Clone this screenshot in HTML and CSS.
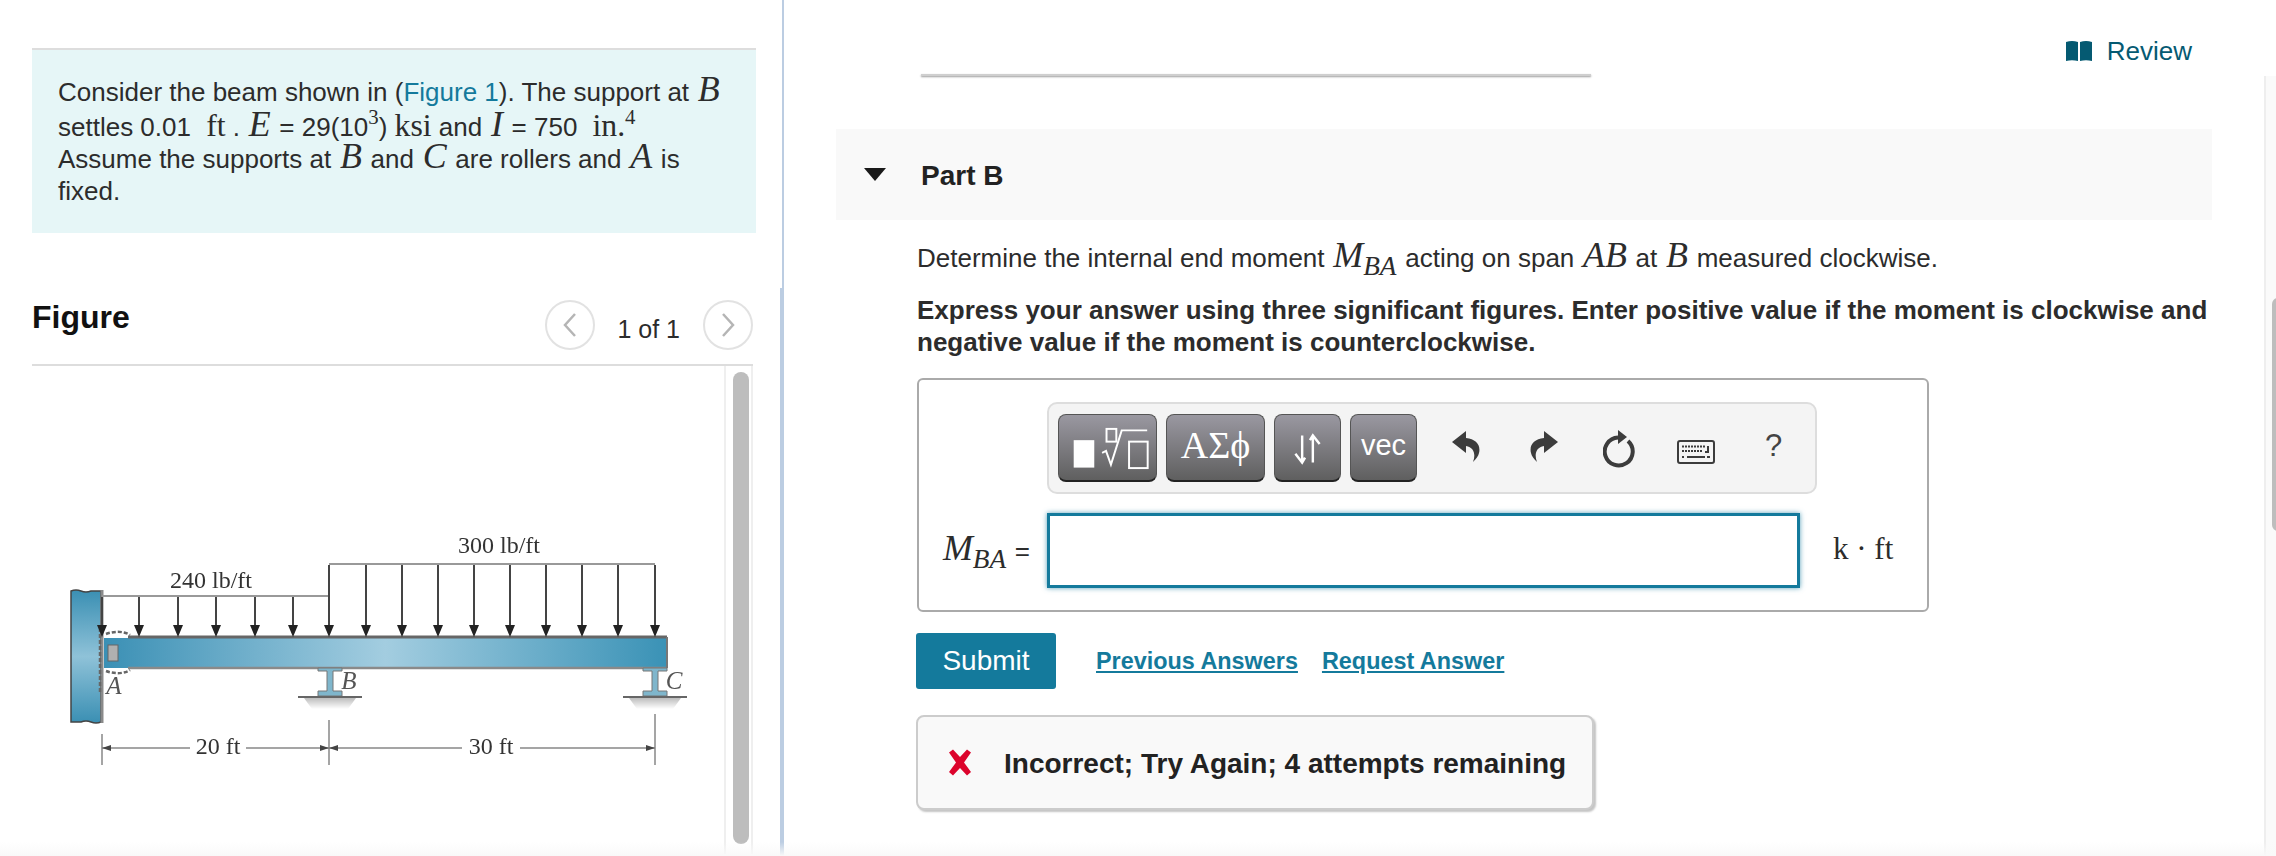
FILE: index.html
```html
<!DOCTYPE html>
<html lang="en">
<head>
  <meta charset="UTF-8">
  <title>Part B - Beam</title>
  <link rel="stylesheet" href="styles.css">
</head>
<body>
  <div class="page">
    <!-- Left: problem statement and figure -->
    <aside class="left-panel">
      <div class="info-box">
        <p class="info-first">Consider the beam shown in (<a href="#" class="fig-link">Figure 1</a>). The support at <i class="math">B</i></p>
        <p>settles 0.01 <span class="unit">&nbsp;ft</span> . <i class="math">E</i> = 29(10<sup class="sup">3</sup>) <span class="unit">ksi</span> and <i class="math">I</i> = 750 <span class="unit">&nbsp;in.</span><sup class="sup">4</sup></p>
        <p>Assume the supports at <i class="math">B</i> and <i class="math">C</i> are rollers and <i class="math">A</i> is</p>
        <p>fixed.</p>
      </div>

      <section class="figure-section">
        <div class="figure-head">
          <h2>Figure</h2>
          <div class="pager">
            <button class="pager-btn" aria-label="Previous">
              <svg width="14" height="26" viewBox="0 0 14 26"><path class="chevron" d="M12 2 2 13l10 11"/></svg>
            </button>
            <span class="pager-text">1 of 1</span>
            <button class="pager-btn" aria-label="Next">
              <svg width="14" height="26" viewBox="0 0 14 26"><path class="chevron" d="M2 2l10 11L2 24"/></svg>
            </button>
          </div>
        </div>
        <div class="figure-view">
          <svg class="beam-diagram" width="692" height="488" viewBox="32 366 692 488">
            <defs>
              <linearGradient id="beamFill" x1="0" x2="1" y1="0" y2="0">
                <stop offset="0" stop-color="#3b90b5"/>
                <stop offset="0.5" stop-color="#a3cde0"/>
                <stop offset="1" stop-color="#3a92b6"/>
              </linearGradient>
              <linearGradient id="wallFill" x1="0" x2="0" y1="0" y2="1">
                <stop offset="0" stop-color="#3a8fb3"/>
                <stop offset="0.5" stop-color="#8fc2d8"/>
                <stop offset="1" stop-color="#3a8fb3"/>
              </linearGradient>
              <linearGradient id="groundFill" x1="0" x2="0" y1="0" y2="1">
                <stop offset="0" stop-color="#bdbdbd"/>
                <stop offset="1" stop-color="#ffffff"/>
              </linearGradient>
              <g id="head"><path d="M-5 625H5L0 637Z"/></g>
              <g id="short"><path class="load-shaft" d="M0 597V626"/><use href="#head"/></g>
              <g id="long"><path class="load-shaft" d="M0 565V626"/><use href="#head"/></g>
              <g id="support">
                <path class="ground-shade" d="M-26 698H26L18 709H-18Z"/>
                <path class="support-steel" d="M-12 668H12V671H3V691H12V696H-12V691H-3V671H-12Z"/>
                <path class="ground-line" d="M-32 697H32"/>
              </g>
            </defs>

            <!-- wall and beam -->
            <path class="wall" d="M71 591q5-2 10 0t10 0l10 0V722q-5 2-10 0t-10 0l-10 0Z"/>
            <path class="wall-edge" d="M102 590V723"/>
            <rect class="beam" x="104" y="638" width="563" height="30"/>
            <path class="beam-top" d="M128 637H667"/>
            <path class="beam-bottom" d="M128 668H667"/>
            <path class="beam-end" d="M667 637V668"/>
            <path class="weld" d="M106 634c8-3 18-3 24 1M106 671c8 3 18 3 24-1M100 628V694"/>
            <rect class="bolts" x="108" y="645" width="10" height="16"/>

            <!-- distributed load -->
            <path class="load-line" d="M102 596H329"/>
            <path class="load-line" d="M329 564H655"/>
            <use href="#short" x="102"/>
            <use href="#short" x="139"/>
            <use href="#short" x="178"/>
            <use href="#short" x="216"/>
            <use href="#short" x="255"/>
            <use href="#short" x="293"/>
            <use href="#long" x="329"/>
            <use href="#long" x="366"/>
            <use href="#long" x="402"/>
            <use href="#long" x="438"/>
            <use href="#long" x="474"/>
            <use href="#long" x="510"/>
            <use href="#long" x="546"/>
            <use href="#long" x="582"/>
            <use href="#long" x="618"/>
            <use href="#long" x="655"/>

            <use href="#support" x="330"/>
            <use href="#support" x="655"/>

            <!-- dimensions -->
            <path class="dim-line" d="M102 734V765M329 720V765M655 714V765"/>
            <path class="dim-line" d="M102 748H190M246 748H329M329 748H462M520 748H655"/>
            <path class="dim-head" d="M102 748l9-3v6ZM329 748l-9-3v6ZM329 748l9-3v6ZM655 748l-9-3v6Z"/>

            <text class="fig-label" x="211" y="588" text-anchor="middle">240 lb/ft</text>
            <text class="fig-label" x="499" y="553" text-anchor="middle">300 lb/ft</text>
            <text class="fig-label" x="218" y="754" text-anchor="middle">20 ft</text>
            <text class="fig-label" x="491" y="754" text-anchor="middle">30 ft</text>
            <text class="fig-point" x="114" y="694" text-anchor="middle">A</text>
            <text class="fig-point" x="349" y="689" text-anchor="middle">B</text>
            <text class="fig-point" x="674" y="689" text-anchor="middle">C</text>
          </svg>
          <div class="figure-scroll"><div class="figure-thumb"></div></div>
        </div>
      </section>
    </aside>

    <!-- Right: question -->
    <main class="right-panel">
      <div class="review-row">
        <a href="#" class="review-link">
          <svg class="book-icon" width="26" height="21" viewBox="0 0 26 21"><path d="M0 1q6-2 12 0V20q-6-1.500-12 0ZM14 1q6-2 12 0V20q-6-1.500-12 0Z"/></svg>
          Review
        </a>
      </div>
      <div class="top-rule"></div>

      <div class="part-head">
        <span class="part-caret"></span>
        <h3>Part B</h3>
      </div>

      <div class="part-body">
        <p class="question">Determine the internal end moment <i class="math">M<sub>BA</sub></i> acting on span <i class="math">AB</i> at <i class="math">B</i> measured clockwise.</p>
        <p class="instruction">Express your answer using three significant figures. Enter positive value if the moment is clockwise and negative value if the moment is counterclockwise.</p>

        <div class="answer-box">
          <div class="toolbar">
            <button class="tool-btn tool-wide" aria-label="Templates">
              <svg width="99" height="68" viewBox="0 0 99 68">
                <rect class="tpl-solid" x="15" y="26" width="21" height="28"/>
                <rect class="tpl-line" x="48.500" y="14.500" width="10" height="13"/>
                <path class="tpl-line" d="M44 39l4-2 5 14 11-35h26"/>
                <rect class="tpl-line" x="71.500" y="27.500" width="19" height="27"/>
              </svg>
            </button>
            <button class="tool-btn tool-wide tool-greek">ΑΣϕ</button>
            <button class="tool-btn tool-narrow" aria-label="Arrows">
              <svg width="67" height="68" viewBox="0 0 67 68">
                <path class="tpl-arrow" d="M28 21V49M21 40l7 9 3-5M39 49V21M46 30l-7-9-3 5"/>
              </svg>
            </button>
            <button class="tool-btn tool-narrow tool-vec">vec</button>
            <div class="tool-icons">
              <svg class="tool-icon icon-undo" width="28" height="31" viewBox="0 0 28 31" aria-label="Undo"><path d="M0 11 14 0v7c10 1 15 7 13 15-.5 3-3 6-6 9 3-7 1-15-7-16v7Z"/></svg>
              <svg class="tool-icon icon-redo" width="28" height="31" viewBox="0 0 28 31" aria-label="Redo"><path d="M28 11 14 0v7C4 8-1 14 1 22c.5 3 3 6 6 9-3-7-1-15 7-16v7Z"/></svg>
              <svg class="tool-icon icon-reset" width="34" height="38" viewBox="0 0 34 38" aria-label="Reset"><path class="reset-ring" d="M25 11a14 14 0 1 1-10-3.500"/><path d="M15 0l9 7-9 7Z"/></svg>
              <svg class="tool-icon icon-kb" width="38" height="24" viewBox="0 0 38 24" aria-label="Keyboard">
                <rect class="kb-frame" x="1" y="1" width="36" height="22" rx="2"/>
                <path class="kb-keys" d="M5 6.500h2m1 0h2m1 0h2m1 0h2m1 0h2m1 0h2m1 0h2m1 0h2M5 11h2m1 0h2m1 0h2m1 0h2m1 0h2m1 0h2m1 0h2M31 6v6h-3M5 17h2m3 0h18m2 0h3"/>
              </svg>
              <span class="help-mark">?</span>
            </div>
          </div>

          <div class="input-row">
            <label class="input-label"><i class="math">M<sub>BA</sub></i>&nbsp;=</label>
            <input class="answer-input" type="text" aria-label="Answer">
            <span class="input-unit">k · ft</span>
          </div>
        </div>

        <div class="actions">
          <button class="btn-submit">Submit</button>
          <a href="#" class="action-link link-prev">Previous Answers</a>
          <a href="#" class="action-link">Request Answer</a>
        </div>

        <div class="feedback">
          <svg class="x-icon" width="28" height="27" viewBox="0 0 28 27"><path d="M3 3.500 7 .5l7 7.500 7-7.500 4 3-7 10 7 9.500-4 3.500-7-7.500L7 26.500l-4-3.500 7-9.500Z"/></svg>
          <strong>Incorrect; Try Again; 4 attempts remaining</strong>
        </div>
      </div>

      <div class="page-scroll"><div class="page-thumb"></div></div>
    </main>

    <div class="bottom-fade"></div>
  </div>
</body>
</html>
```

FILE: styles.css
```css
/* Global */
:root {
  --teal: #147a9c;
  --dark-teal: #055a72;
  --text: #2c2c2c;
  --rule: #dddddd;
  --divider: #bccde2;
}

* {
  margin: 0;
  padding: 0;
  box-sizing: border-box;
}

html, body {
  height: 856px;
  overflow: hidden;
  background-color: white;
}

body {
  color: var(--text);
  font-family: 'Liberation Sans', Arial, sans-serif;
  font-size: 26px;
  line-height: 32px;
}

button {
  font-family: inherit;
  border: none;
  cursor: pointer;
}

.page {
  position: relative;
  display: flex;
  height: 856px;
}

.math {
  margin: 0 1.5px;
  font-family: 'Liberation Serif', serif;
  font-style: italic;
  font-size: 1.38em;
  line-height: 0;
}

.math sub {
  font-size: 0.76em;
  line-height: 0;
  vertical-align: -0.3em;
}

.unit {
  font-family: 'Liberation Serif', serif;
  font-size: 1.22em;
  line-height: 0;
}

.sup {
  font-family: 'Liberation Serif', serif;
  font-size: 0.8em;
  line-height: 0;
  vertical-align: 0.6em;
}

/* Left panel */
.left-panel {
  width: 784px;
  flex-shrink: 0;
  padding-top: 48px;
  border-right: 2px solid var(--divider);
}

.info-box {
  width: 724px;
  height: 185px;
  margin-left: 32px;
  padding: 26px 26px 0;
  background-color: #e6f6f7;
  border-top: 2px solid var(--rule);
}

.info-first {
  margin-bottom: 3px;
}

.fig-link {
  color: var(--teal);
  text-decoration: none;
}

.figure-section {
  height: 568px;
  margin-top: 55px;
  padding-left: 32px;
  border-right: 2px solid var(--divider);
}

.figure-head {
  display: flex;
  justify-content: space-between;
  width: 721px;
  height: 78px;
  border-bottom: 2px solid var(--rule);
}

.figure-head h2 {
  font-size: 32px;
  line-height: 36px;
  margin-top: 11px;
  color: #111;
}

.pager {
  display: flex;
  align-items: center;
  height: 50px;
  margin-top: 12px;
}

.pager-btn {
  display: flex;
  align-items: center;
  justify-content: center;
  width: 50px;
  height: 50px;
  border: 2px solid #e2e2e2;
  border-radius: 50%;
  background-color: white;
}

.chevron {
  fill: none;
  stroke: #b5b5b5;
  stroke-width: 2.5;
}

.pager-text {
  margin: 8px 23px 0 22px;
  font-size: 25px;
}

.figure-view {
  display: flex;
}

.beam-diagram {
  display: block;
  flex-shrink: 0;
  filter: blur(0.7px);
}

.figure-scroll {
  width: 29px;
  height: 488px;
  padding: 6px 0 0 7px;
  border-left: 2px solid #efefef;
  border-right: 2px solid #efefef;
}

.figure-thumb {
  width: 16px;
  height: 472px;
  border-radius: 8px;
  background-color: #bdbdbd;
}

/* Beam drawing */
.wall { fill: url(#wallFill); stroke: #444; stroke-width: 1.5; }
.wall-edge { stroke: #8a8a8a; stroke-width: 3; }
.beam { fill: url(#beamFill); }
.beam-top { stroke: #666; stroke-width: 3; }
.beam-bottom { stroke: #8a8a8a; stroke-width: 2.500; }
.beam-end { stroke: #777; stroke-width: 2; }
.weld { fill: none; stroke: #666; stroke-width: 2.500; stroke-dasharray: 4 2; }
.bolts { fill: #b0b0b0; stroke: #666; }
.load-line { stroke: #999; stroke-width: 2; fill: none; }
.load-shaft { stroke: #444; stroke-width: 2; fill: none; }
#head path { fill: #222; }
.ground-shade { fill: url(#groundFill); }
.support-steel { fill: #7fb6cc; stroke: #777; }
.ground-line { stroke: #666; stroke-width: 2; }
.dim-line { stroke: #888; stroke-width: 1.500; fill: none; }
.dim-head { fill: #444; }

.fig-label {
  font-family: 'Liberation Serif', serif;
  font-size: 24px;
  fill: #333;
}

.fig-point {
  font-family: 'Liberation Serif', serif;
  font-style: italic;
  font-size: 25px;
  fill: #555;
}

/* Right panel */
.right-panel {
  position: relative;
  flex: 1;
}

.review-row {
  display: flex;
  justify-content: flex-end;
  height: 74px;
  padding: 35px 84px 0 0;
}

.review-link {
  display: flex;
  align-items: center;
  height: 32px;
  color: var(--dark-teal);
  text-decoration: none;
}

.book-icon {
  margin-right: 15px;
  fill: var(--dark-teal);
}

.top-rule {
  width: 670px;
  height: 2px;
  margin-left: 137px;
  background-color: #cfcfcf;
  box-shadow: 0 1px 2px #999;
}

.part-head {
  display: flex;
  align-items: center;
  width: 1376px;
  height: 91px;
  margin: 53px 0 0 52px;
  padding-left: 28px;
  background-color: #f9f9f9;
}

.part-caret {
  width: 0;
  height: 0;
  margin-right: 35px;
  border-left: 11px solid transparent;
  border-right: 11px solid transparent;
  border-top: 13px solid #1a1a1a;
}

.part-head h3 {
  padding-top: 2px;
  font-size: 28px;
  color: #222;
}

.part-body {
  padding: 22px 0 0 133px;
}

.instruction {
  width: 1310px;
  margin-top: 20px;
  font-weight: bold;
}

.answer-box {
  width: 1012px;
  height: 234px;
  margin-top: 20px;
  padding: 22px 0 0 128px;
  border: 2px solid #aaa;
  border-radius: 6px;
}

.toolbar {
  display: flex;
  align-items: center;
  gap: 9px;
  width: 770px;
  height: 92px;
  padding-left: 9px;
  background-color: #f4f4f4;
  border: 2px solid var(--rule);
  border-radius: 10px;
}

.tool-btn {
  display: flex;
  align-items: center;
  justify-content: center;
  height: 68px;
  padding: 0;
  color: white;
  background: linear-gradient(to bottom, #9a98a1, #5f5f5f);
  border: 1px solid #555;
  border-bottom: 2px solid #222;
  border-radius: 8px;
}

.tool-wide { width: 99px; }
.tool-narrow { width: 67px; }

.tool-greek {
  font-family: 'Liberation Serif', serif;
  font-size: 38px;
  padding-bottom: 6px;
}

.tool-vec {
  font-size: 29px;
  padding-bottom: 4px;
}

.tpl-solid { fill: white; }
.tpl-line { fill: none; stroke: white; stroke-width: 2; }
.tpl-arrow { fill: none; stroke: white; stroke-width: 2.5; }

.tool-icons {
  display: flex;
  align-items: center;
  flex: 1;
  padding-left: 26px;
}

.tool-icon { fill: #3c3c3c; }
.icon-undo { margin-bottom: 4px; }
.icon-redo { margin: 0 0 4px 50px; }
.icon-reset { margin: 2px 0 0 45px; }
.icon-kb { margin: 7px 0 0 40px; }

.reset-ring {
  fill: none;
  stroke: #3c3c3c;
  stroke-width: 4;
}

.kb-frame { fill: none; stroke: #3c3c3c; stroke-width: 2; }
.kb-keys { fill: none; stroke: #3c3c3c; stroke-width: 2; }

.help-mark {
  margin: 0 0 4px 50px;
  font-size: 31px;
  color: #444;
}

.input-row {
  display: flex;
  align-items: center;
  height: 75px;
  margin: 19px 0 0 -128px;
}

.input-label {
  width: 128px;
  padding-right: 17px;
  text-align: right;
  white-space: nowrap;
}

.answer-input {
  width: 753px;
  height: 75px;
  background-color: white;
  border: 3px solid var(--teal);
  box-shadow: 0 0 5px rgba(20, 122, 156, 0.7);
  outline: none;
}

.input-unit {
  margin: 0 0 4px 33px;
  font-family: 'Liberation Serif', serif;
  font-size: 31px;
  white-space: nowrap;
}

.actions {
  display: flex;
  align-items: center;
  margin-top: 21px;
}

.btn-submit {
  width: 140px;
  height: 56px;
  margin-left: -1px;
  font-size: 28px;
  color: white;
  background-color: var(--teal);
  border-radius: 3px;
}

.action-link {
  font-size: 23.4px;
  font-weight: bold;
  color: var(--teal);
}

.link-prev {
  margin: 0 24px 0 40px;
}

.feedback {
  display: flex;
  align-items: center;
  width: 678px;
  height: 95px;
  margin: 26px 0 0 -1px;
  padding-left: 28px;
  background-color: #f9f9f9;
  border: 2px solid #ccc;
  border-radius: 8px;
  box-shadow: 2px 2px 2px #c4c4c4;
}

.x-icon {
  margin-right: 30px;
  fill: #dc042c;
}

.feedback strong {
  padding-top: 3px;
  font-size: 28px;
  color: #222;
}

.page-scroll {
  position: absolute;
  top: 76px;
  right: 0;
  width: 12px;
  height: 780px;
  background-color: #fafafa;
  border-left: 2px solid #eeeeee;
}

.page-thumb {
  width: 6px;
  height: 233px;
  margin: 222px 0 0 6px;
  border-radius: 6px 0 0 6px;
  background-color: #bdbdbd;
}

.bottom-fade {
  position: absolute;
  left: 0;
  right: 0;
  bottom: 0;
  height: 14px;
  background: linear-gradient(to bottom, rgba(250, 250, 250, 0), #f9f9f9);
  pointer-events: none;
}
```
